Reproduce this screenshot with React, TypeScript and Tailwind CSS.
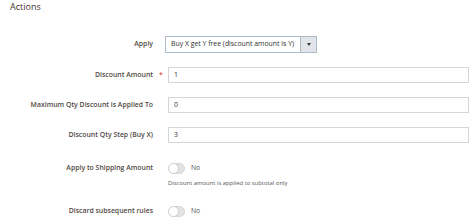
export default function App() {
  const font = { fontFamily: '"Open Sans", "Noto Sans", sans-serif' }

  const Label = ({ text, required }: { text: string; required?: boolean }) => (
    <div className="flex w-[165px] shrink-0 items-center">
      <div className="w-[153px] text-right text-[6.9px] font-semibold text-[#514943]">{text}</div>
      {required && <span className="ml-[6px] text-[7px] leading-none text-[#e22626]">*</span>}
    </div>
  )

  const Toggle = () => (
    <div className="flex items-center">
      <div className="relative h-[11px] w-[17px] rounded-full border border-[#d6d6d6] bg-[#e3e3e3]">
        <div className="absolute left-[-1px] top-[-1px] h-[11px] w-[11px] rounded-full border border-[#d0d0d0] bg-white" />
      </div>
      <span className="ml-[6px] text-[6.8px] text-[#555]">No</span>
    </div>
  )

  return (
    <div className="h-[221px] w-[474px] overflow-hidden bg-white" style={font}>
      <div className="pl-[10px] pt-[1px] text-[9px] leading-[12px] text-[#41362f]">Actions</div>

      <div className="mt-[23px] flex h-[17px] items-center">
        <Label text="Apply" />
        <div className="flex h-[17px] w-[152px] border border-[#adbbc8] bg-white">
          <div className="flex flex-1 items-center whitespace-nowrap pl-[5px] text-[6.9px] text-[#303030]">
            Buy X get Y free (discount amount is Y)
          </div>
          <div className="flex w-[16px] items-center justify-center border-l border-[#adbbc8] bg-[#e1e5ea]">
            <div className="h-0 w-0 border-l-[2px] border-r-[2px] border-t-[3px] border-l-transparent border-r-transparent border-t-[#41362f]" />
          </div>
        </div>
      </div>

      {[
        { label: "Discount Amount", value: "1", required: true },
        { label: "Maximum Qty Discount is Applied To", value: "0" },
        { label: "Discount Qty Step (Buy X)", value: "3" },
      ].map((r) => (
        <div key={r.label} className="mt-[14px] flex h-[16px] items-center">
          <Label text={r.label} required={r.required} />
          <div className="mr-[5px] ml-[3px] flex h-[16px] flex-1 items-center border border-[#d5d5d5] bg-white pl-[5px] text-[6.9px] text-[#303030]">
            {r.value}
          </div>
        </div>
      ))}

      <div className="mt-[20px] flex h-[11px] items-center">
        <Label text="Apply to Shipping Amount" />
        <div className="ml-[3px]">
          <Toggle />
        </div>
      </div>
      <div className="ml-[168px] mt-[5px] text-[5.9px] text-[#555]">Discount amount is applied to subtotal only</div>

      <div className="mt-[18px] flex h-[11px] items-center">
        <Label text="Discard subsequent rules" />
        <div className="ml-[3px]">
          <Toggle />
        </div>
      </div>
    </div>
  )
}
